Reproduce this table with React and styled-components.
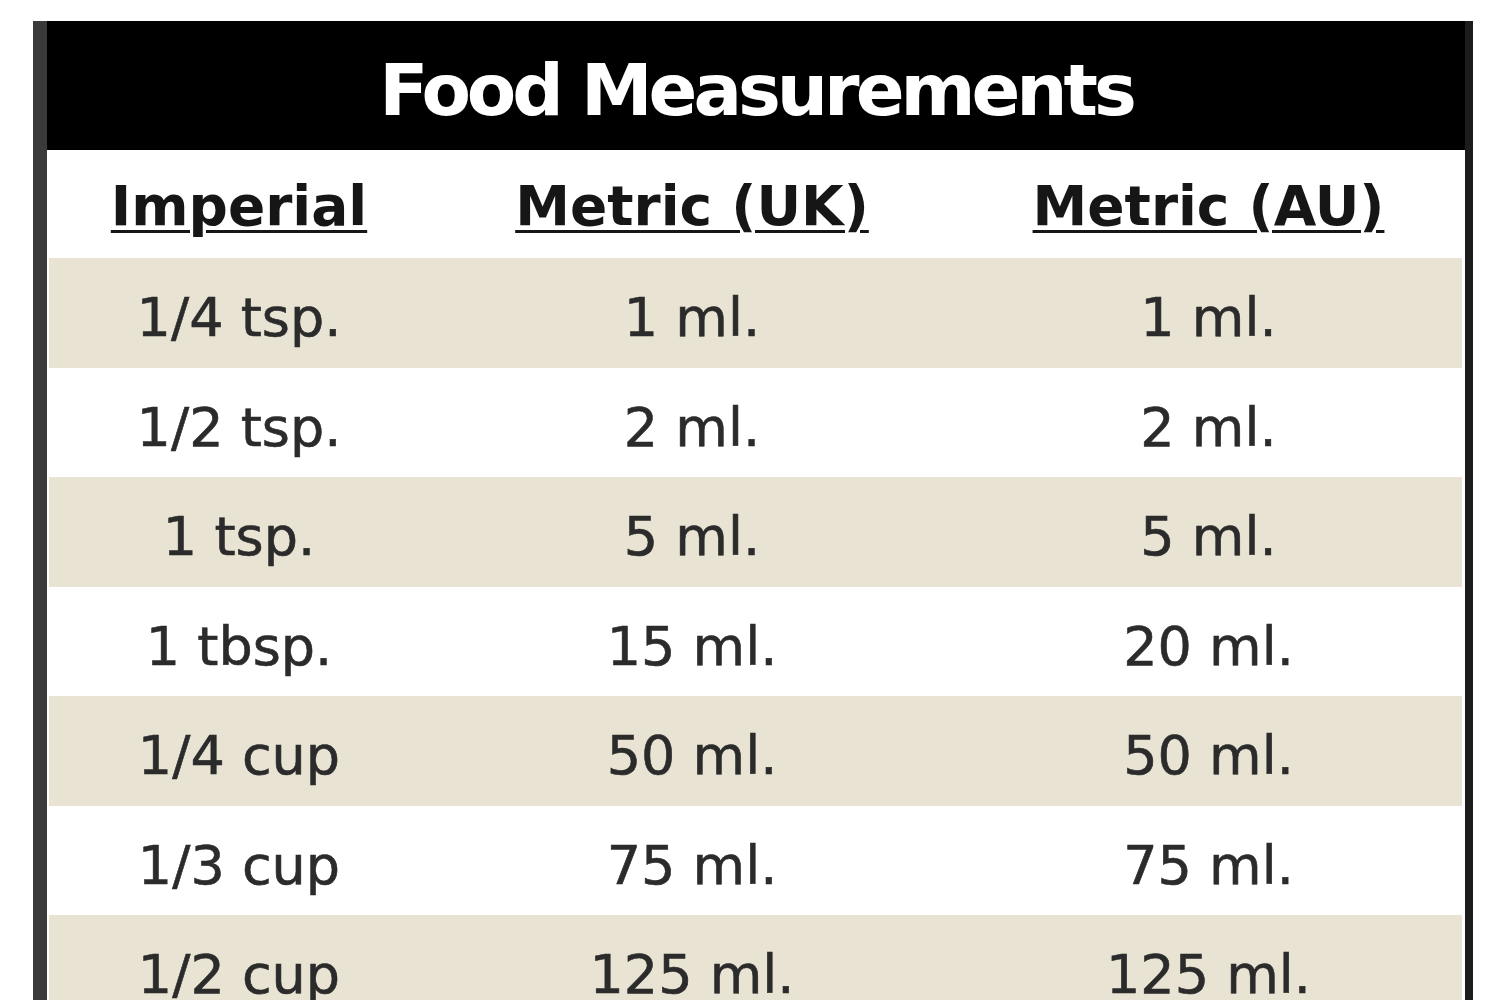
import React from "react";
import styled, { createGlobalStyle } from "styled-components";

const GlobalStyle = createGlobalStyle`
  body {
    margin: 0;
    background: #ffffff;
    font-family: "DejaVu Sans", Verdana, sans-serif;
  }
`;

const Page = styled.div`
  height: 1000px;
  overflow: hidden;
  padding: 21px 27px 0 33px;
`;

const Chart = styled.div`
  border-left: 14px solid #3a3a3a;
  border-right: 8px solid #1c1c1c;
  background: #ffffff;
`;

const Title = styled.div`
  background: #000000;
  color: #ffffff;
  height: 129px;
  display: flex;
  align-items: center;
  justify-content: center;
  padding-top: 8px;
  box-sizing: border-box;
  font-weight: bold;
  font-size: 72px;
  letter-spacing: -4px;
`;

const Row = styled.div`
  display: grid;
  grid-template-columns: 380px 526px 1fr;
  height: ${(p) => p.h || 109.5}px;
  background: ${(p) => (p.shade ? "#e8e3d3" : "#ffffff")};
  margin: 0 3px 0 2px;
  align-items: center;
`;

const Head = styled.div`
  text-align: center;
  font-weight: bold;
  font-size: 55px;
  color: #161616;
  text-decoration: underline;
  text-decoration-thickness: 3px;
  text-underline-offset: 5px;
  padding-top: 4px;
`;

const Cell = styled.div`
  text-align: center;
  font-size: 54px;
  color: #2b2b2b;
  padding-top: 10px;
  -webkit-text-stroke: 0.6px #2b2b2b;
`;

const rows = [
  ["1/4 tsp.", "1 ml.", "1 ml."],
  ["1/2 tsp.", "2 ml.", "2 ml."],
  ["1 tsp.", "5 ml.", "5 ml."],
  ["1 tbsp.", "15 ml.", "20 ml."],
  ["1/4 cup", "50 ml.", "50 ml."],
  ["1/3 cup", "75 ml.", "75 ml."],
  ["1/2 cup", "125 ml.", "125 ml."],
];

export default function App() {
  return (
    <Page>
      <GlobalStyle />
      <Chart>
        <Title>Food Measurements</Title>
        <Row h={108}>
          <Head>Imperial</Head>
          <Head>Metric (UK)</Head>
          <Head>Metric (AU)</Head>
        </Row>
        {rows.map((r, i) => (
          <Row key={i} shade={i % 2 === 0}>
            {r.map((c, j) => (
              <Cell key={j}>{c}</Cell>
            ))}
          </Row>
        ))}
      </Chart>
    </Page>
  );
}
